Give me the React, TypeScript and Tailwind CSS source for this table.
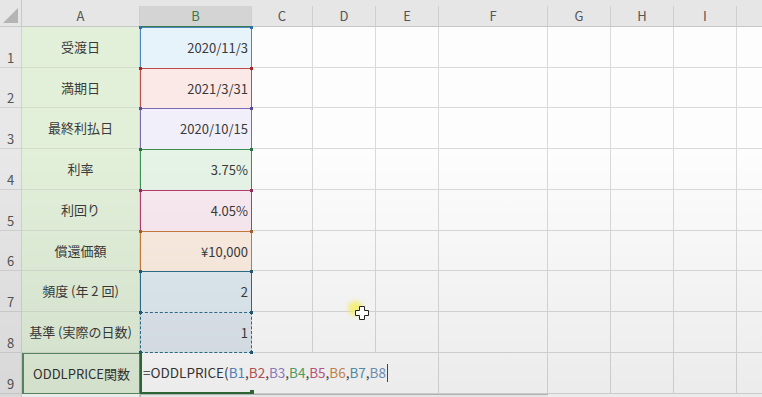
import type { JSX } from "react";

const font = "font-['Noto_Sans_CJK_JP','Noto_Sans',sans-serif]";

const cols = ["A", "B", "C", "D", "E", "F", "G", "H", "I", "J"];
const rowHeights = ["h-[41px]", "h-[40px]", "h-[41px]", "h-[41px]", "h-[41px]", "h-[40px]", "h-[41px]", "h-[41px]", "h-[41px]"];

interface RangeCell {
  label: string;
  value: string;
  border: string;
  bg: string;
  handle: string;
  dashed?: boolean;
}

const data: RangeCell[] = [
  { label: "受渡日", value: "2020/11/3", border: "border-[#4a86c0]", bg: "bg-[#e7f3fa]", handle: "bg-[#2f6fa8]" },
  { label: "満期日", value: "2021/3/31", border: "border-[#c24a4a]", bg: "bg-[#fbe9e7]", handle: "bg-[#a32828]" },
  { label: "最終利払日", value: "2020/10/15", border: "border-[#7d6ab4]", bg: "bg-[#f1effa]", handle: "bg-[#5c4a98]" },
  { label: "利率", value: "3.75%", border: "border-[#3d8f52]", bg: "bg-[#e6f4e7]", handle: "bg-[#2a7040]" },
  { label: "利回り", value: "4.05%", border: "border-[#b43c6c]", bg: "bg-[#f9e9f1]", handle: "bg-[#952c58]" },
  { label: "償還価額", value: "¥10,000", border: "border-[#c87a3c]", bg: "bg-[#fcede1]", handle: "bg-[#a85e28]" },
  { label: "頻度 (年 2 回)", value: "2", border: "border-[#2c6e8a]", bg: "bg-[#dfebf1]", handle: "bg-[#1f5a74]" },
  { label: "基準 (実際の日数)", value: "1", border: "border-[#2c6e8a]", bg: "bg-[#dfe7ef]", handle: "bg-[#1f5a74]", dashed: true },
];

const refs = [
  { t: "B1", c: "text-[#4f80b6]" },
  { t: "B2", c: "text-[#b24f4f]" },
  { t: "B3", c: "text-[#8a78b8]" },
  { t: "B4", c: "text-[#4f9a60]" },
  { t: "B5", c: "text-[#b8527c]" },
  { t: "B6", c: "text-[#c0804e]" },
  { t: "B7", c: "text-[#4f8aa2]" },
  { t: "B8", c: "text-[#6a8cb0]" },
];

function Handles({ color }: { color: string }): JSX.Element {
  return (
    <>
      <span className={`absolute -left-[2px] -top-[2px] w-[3px] h-[3px] ${color}`} />
      <span className={`absolute -right-[2px] -top-[2px] w-[3px] h-[3px] ${color}`} />
    </>
  );
}

function EmptyCells({ h, last }: { h: string; last?: boolean }): JSX.Element {
  return (
    <>
      {cols.slice(2).map((c, i) => (
        <div
          key={c}
          className={`${h} border-b border-[#dadada] ${
            last && (i === 0 || i === 1) ? "" : "border-r"
          }`}
        />
      ))}
    </>
  );
}

export default function App(): JSX.Element {
  return (
    <div className={`relative w-[762px] h-[397px] overflow-hidden bg-[#fdfdfd] text-[#3a3a3a] ${font}`}>
      <div className="grid grid-cols-[22px_118px_112px_61px_63px_63px_109px_63px_63px_63px_63px]">
        {/* header row */}
        <div className="h-[27px] bg-[#e6e6e6] border-b border-[#c8c8c8] border-r flex items-end justify-end pr-[2px] pb-[2px]">
          <svg width="17" height="17" viewBox="0 0 17 17">
            <polygon points="16,1 16,16 1,16" fill="#b4b4b4" />
          </svg>
        </div>
        {cols.map((c) => (
          <div key={c} className="h-[27px] bg-[#e6e6e6] border-b border-[#c6c6c6] flex flex-col">
            <div
              className={`mt-[6px] flex-1 flex items-center justify-center text-[13px] border-r border-[#cfcfcf] ${
                c === "B"
                  ? "bg-[#d4d4d4] text-[#3c7a4a] border-b-2 border-b-[#3c7a4a]"
                  : "text-[#555]"
              }`}
            >
              {c === "J" ? "" : c}
            </div>
          </div>
        ))}

        {/* data rows */}
        {data.map((r, i) => (
          <div key={r.label} className="contents">
            <div className={`${rowHeights[i]} bg-[#e8e8e8] border-b border-r border-[#d2d2d2] flex items-end pl-[7px] pb-[3px] text-[13px] text-[#555] leading-none`}>
              {i + 1}
            </div>
            <div className={`${rowHeights[i]} bg-[#e2f0da] border-b border-r border-[#d3dccd] flex items-center justify-center whitespace-pre text-[13px]`}>
              {r.label}
            </div>
            <div
              className={`relative ${rowHeights[i]} ${r.bg} ${r.border} border-x border-t ${
                r.dashed ? "border-dashed border-b" : ""
              } flex items-center justify-end pr-[3px] text-[13px]`}
            >
              {r.value}
              <Handles color={r.handle} />
              {r.dashed && (
                <>
                  <span className={`absolute -left-[2px] -bottom-[2px] w-[3px] h-[3px] ${r.handle}`} />
                  <span className={`absolute -right-[2px] -bottom-[2px] w-[3px] h-[3px] ${r.handle}`} />
                </>
              )}
            </div>
            <EmptyCells h={rowHeights[i]} />
          </div>
        ))}

        {/* row 9 */}
        <div className="h-[41px] bg-[#e8e8e8] border-b border-r border-[#d2d2d2] flex items-end pl-[7px] pb-[3px] text-[13px] text-[#555] leading-none">
          9
        </div>
        <div className="h-[41px] bg-[#e2f0da] border-l-2 border-t border-r border-b border-[#5e8a64] flex items-center justify-center text-[13px] text-[#333]">
          ODDLPRICE関数
        </div>
        <div className="relative h-[41px] border-l-2 border-b-2 border-[#2f6b3a] flex items-center pl-[1px] text-[13.5px]">
          <span className="relative z-10 whitespace-nowrap flex items-center">
            <span className="text-[#555]">=</span>
            <span className="text-[#333]">ODDLPRICE(</span>
            {refs.map((r, i) => (
              <span key={r.t} className="flex">
                <span className={r.c}>{r.t}</span>
                {i < refs.length - 1 && <span className="text-[#444]">,</span>}
              </span>
            ))}
            <span className="ml-[1px] w-[1px] h-[18px] bg-[#444]" />
          </span>
          <span className="absolute -right-[2px] -bottom-[2px] w-[4px] h-[4px] bg-[#2f6b3a]" />
        </div>
        <EmptyCells h="h-[41px]" last />

        {/* row 10 peek */}
        <div className="h-[6px] bg-[#e8e8e8] border-r border-[#d2d2d2]" />
        <div className="h-[6px] border-r border-[#d3dccd]" />
        <div className="h-[6px] col-span-5 border-t border-l border-[#bdbdbd] bg-[#f6f6f6]" />
      </div>

      {/* bottom darkening from the video frame */}
      <div className="pointer-events-none absolute inset-x-0 top-[150px] bottom-0 bg-gradient-to-b from-transparent to-black/[0.07]" />

      {/* mouse pointer highlight */}
      <div className="pointer-events-none absolute left-[348px] top-[301px] w-[15px] h-[15px] rounded-full bg-[#f2ee60]/80 blur-[2px]" />
      <svg className="pointer-events-none absolute left-[355px] top-[306px]" width="14" height="14" viewBox="0 0 14 14">
        <path d="M4.5 0.5h5v4h4v5h-4v4h-5v-4h-4v-5h4z" fill="#fff" stroke="#222" strokeWidth="1" />
      </svg>
    </div>
  );
}
